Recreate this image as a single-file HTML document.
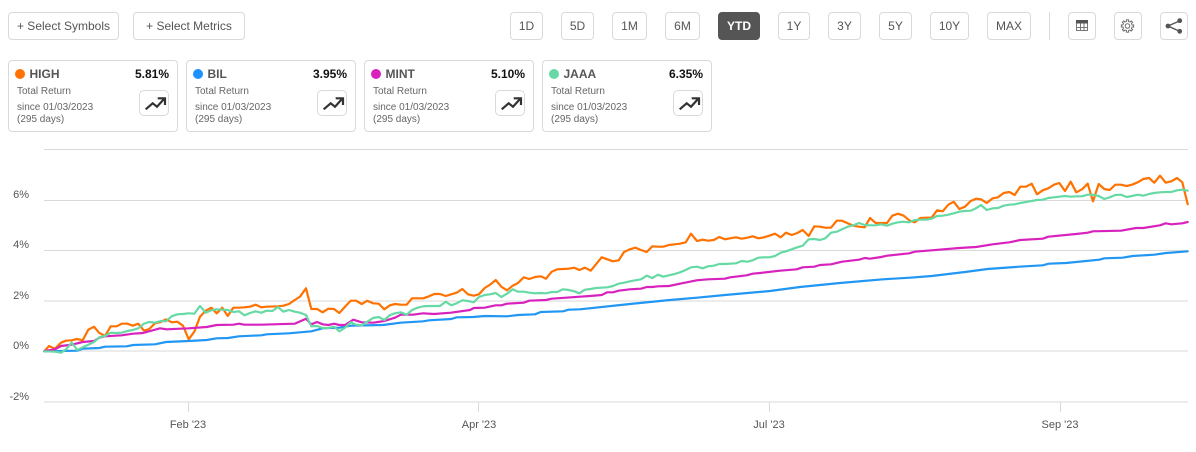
<!DOCTYPE html>
<html><head><meta charset="utf-8"><style>
html,body{margin:0;padding:0;background:#fff}
#p{position:relative;width:1196px;height:452px;overflow:hidden;font-family:"Liberation Sans",Arial,sans-serif;color:#555}
.b{position:absolute;top:12px;height:26px;border:1px solid #d9d9d9;border-radius:4px;background:#fff;font-size:12px;line-height:26px;text-align:center;white-space:nowrap}
.c{position:absolute;top:60px;width:168px;height:70px;border:1px solid #d9d9d9;border-radius:4px;background:#fff}
.d{position:absolute;left:6px;top:8px;width:10px;height:10px;border-radius:50%}
.t{position:absolute;left:20.5px;top:6px;font-size:12px;line-height:14px;font-weight:bold;color:#555}
.v{position:absolute;right:8px;top:6px;font-size:12px;line-height:14px;font-weight:bold;color:#111}
.s{position:absolute;left:8px;font-size:10px;line-height:12px;color:#666;white-space:nowrap}
.i{position:absolute;left:130px;top:29px;width:28px;height:24px;border:1px solid #d9d9d9;border-radius:5px}
.i svg{position:absolute;left:0;top:0}
.y{position:absolute;right:1167px;font-size:11px;line-height:12px;color:#555;white-space:nowrap}
.x{position:absolute;top:419px;width:60px;text-align:center;font-size:11px;line-height:12px;color:#555}
</style></head><body><div id="p">
<div class="b" style="left:8px;width:109px">+ Select Symbols</div>
<div class="b" style="left:133px;width:110px">+ Select Metrics</div>
<div class="b" style="left:510px;width:31px">1D</div>
<div class="b" style="left:561px;width:31px">5D</div>
<div class="b" style="left:612px;width:33px">1M</div>
<div class="b" style="left:665px;width:33px">6M</div>
<div class="b" style="left:718px;width:40px;background:#555;border-color:#555;color:#fff;font-weight:bold">YTD</div>
<div class="b" style="left:778px;width:30px">1Y</div>
<div class="b" style="left:828px;width:31px">3Y</div>
<div class="b" style="left:879px;width:31px">5Y</div>
<div class="b" style="left:930px;width:37px">10Y</div>
<div class="b" style="left:987px;width:42px">MAX</div>
<div style="position:absolute;left:1049px;top:12px;width:1px;height:28px;background:#d9d9d9"></div>
<div class="b" style="left:1068px;width:26px"></div>
<div class="b" style="left:1114px;width:26px"></div>
<div class="b" style="left:1160px;width:26px"></div>
<svg style="position:absolute;left:0;top:0" width="1196" height="452">
<rect x="1076" y="20" width="12" height="3.500" fill="#555"/>
<path d="M1076.500 23.500V31M1080.500 23.500V31M1084 23.500V31M1087.500 23.500V31M1076 27.500H1088M1076 30.500H1088" stroke="#777" stroke-width="1" fill="none"/>
<g transform="translate(1127.500 26)"><polygon points="4.6,-.98 6.2,-1.09 6.2,1.09 4.6,.98 3.94,2.56 5.16,3.61 3.61,5.16 2.56,3.94 .98,4.6 1.09,6.2 -1.09,6.2 -.98,4.6 -2.56,3.94 -3.61,5.16 -5.16,3.61 -3.94,2.56 -4.6,.98 -6.2,1.09 -6.2,-1.09 -4.6,-.98 -3.94,-2.56 -5.16,-3.61 -3.61,-5.16 -2.56,-3.94 -.98,-4.6 -1.09,-6.2 1.09,-6.2 .98,-4.6 2.56,-3.94 3.61,-5.16 5.16,-3.61 3.94,-2.56" fill="none" stroke="#666" stroke-width=".9"/><circle r="2.3" fill="none" stroke="#666" stroke-width=".9"/></g>
<path d="M1179.500 21L1168 26L1179.500 31.300" fill="none" stroke="#555" stroke-width="1.400"/>
<circle cx="1168" cy="26" r="2.400" fill="#555"/><circle cx="1179.700" cy="20.700" r="2.400" fill="#555"/><circle cx="1179.700" cy="31.300" r="2.400" fill="#555"/>
</svg>

<div class="c" style="left:8px"><span class="d" style="background:#ff7200"></span><span class="t">HIGH</span><span class="v">5.81%</span><span class="s" style="top:25px">Total Return</span><span class="s" style="top:41px">since 01/03/2023</span><span class="s" style="top:53px">(295 days)</span><div class="i"><svg width="28" height="24"><path d="M5.700 18.300L12.700 12.300L17 15.700L24 8M17.700 7.300H25V14" fill="none" stroke="#333" stroke-width="2.200"/></svg></div></div>
<div class="c" style="left:186px"><span class="d" style="background:#1e90ff"></span><span class="t">BIL</span><span class="v">3.95%</span><span class="s" style="top:25px">Total Return</span><span class="s" style="top:41px">since 01/03/2023</span><span class="s" style="top:53px">(295 days)</span><div class="i"><svg width="28" height="24"><path d="M5.700 18.300L12.700 12.300L17 15.700L24 8M17.700 7.300H25V14" fill="none" stroke="#333" stroke-width="2.200"/></svg></div></div>
<div class="c" style="left:364px"><span class="d" style="background:#d822bd"></span><span class="t">MINT</span><span class="v">5.10%</span><span class="s" style="top:25px">Total Return</span><span class="s" style="top:41px">since 01/03/2023</span><span class="s" style="top:53px">(295 days)</span><div class="i"><svg width="28" height="24"><path d="M5.700 18.300L12.700 12.300L17 15.700L24 8M17.700 7.300H25V14" fill="none" stroke="#333" stroke-width="2.200"/></svg></div></div>
<div class="c" style="left:542px"><span class="d" style="background:#66d9a5"></span><span class="t">JAAA</span><span class="v">6.35%</span><span class="s" style="top:25px">Total Return</span><span class="s" style="top:41px">since 01/03/2023</span><span class="s" style="top:53px">(295 days)</span><div class="i"><svg width="28" height="24"><path d="M5.700 18.300L12.700 12.300L17 15.700L24 8M17.700 7.300H25V14" fill="none" stroke="#333" stroke-width="2.200"/></svg></div></div>

<div class="y" style="top:189px">6%</div>
<div class="y" style="top:239px">4%</div>
<div class="y" style="top:290px">2%</div>
<div class="y" style="top:340px">0%</div>
<div class="y" style="top:391px">-2%</div>
<div class="x" style="left:158px">Feb '23</div>
<div class="x" style="left:449px">Apr '23</div>
<div class="x" style="left:739px">Jul '23</div>
<div class="x" style="left:1030px">Sep '23</div>

<svg style="position:absolute;left:0;top:0" width="1196" height="452">
<path d="M44 149.500H1188M44 200.500H1188M44 250.500H1188M44 301H1188M44 351H1188M44 402H1188M188.500 402V412M478.500 402V412M769.500 402V412M1060.500 402V412" stroke="#d9d9d9" stroke-width="1" fill="none"/>
<g fill="none" stroke-width="2.200" stroke-linejoin="round" stroke-linecap="round">
<polyline stroke="#ff7200" points="44.3,351.3 49,346 55,348.7 61,342.7 66,340.7 71.7,340.3 77,339 82.7,340.3 88.3,329.7 94,326.7 99,332.7 105,336 110.7,326.3 116.7,326.300 121.700,323.700 127.300,323.700 132.700,325.700 138.300,323.700 144,330.700 149.300,329 155,323.300 160.700,322 166,319.300 171.700,322.300 177.300,321.700 183,325.700 188.700,339.300 194.300,331.700 200,316.700 205.700,310.700 211.300,307.700 216.700,313.300 222.300,307.700 227.700,316 233.300,307.700 239,307.700 244.300,307.300 250,306.700 255.700,304.700 261.300,307.300 266.700,306.700 278,306.300 283.300,305.700 289,304 294.700,300 300,296.700 306,288.300 311.300,309 317,309 322.700,312.300 328.300,308.700 334,309 339.300,313 345,306.700 350.700,300.700 356,300.700 361.700,304 367.300,300.700 373,303.300 378.700,303.700 384.300,309.300 390,305.300 395,304 400.700,304.700 406.700,304.700 412,298.300 417.700,298.300 423.300,298.300 429,296.300 434.300,294 440,294 445.700,296 451.300,294.300 456.700,292.700 462.300,289 468,294.300 473.700,295.700 479,294.300 484.700,288 490,284.700 495.700,280 501.300,286.700 507,290.300 512.700,285.700 518,283 523.700,277.300 529.300,279 535,277 540.700,276.300 546,278.700 551.700,271.700 557.300,269.300 563,269 568.700,268.700 574.300,267.700 579.300,270 585,267.700 590.700,270.700 601.700,257.300 607.300,259.300 613,261.300 618.700,260.300 624,252 630,249.300 635.300,247.700 641,250 646.700,252 652.300,246.300 658,246.700 663.300,246.700 669,245 674.700,244.300 680,243.700 685.700,242.300 691,233.700 697,241 702.700,239.700 708,240.700 713.700,240 719.300,237 725,239.300 730.300,238.300 736,237.300 741.700,238.700 747.300,237.700 752.700,236.300 758.300,238.300 764,237.300 769.300,235.700 775,233.700 780.700,237.300 786,232.700 791.700,235 797.300,233 802.700,230 808.700,236 814.300,226.300 820,226.700 825.300,227.700 831,227.700 836.700,220.700 842,220.700 847.700,223.300 853.300,225.700 859,226.700 864.700,227.300 870,218 875.700,223 881.300,223 887,223 892.300,215.700 898,213.700 903.700,215.700 909.300,220.300 914.700,222.300 920.300,218 926,217.700 931.700,217.700 937,210.300 942.700,211.300 948.300,204.700 953.700,201.700 959.300,209 965,206.700 970.700,201 976,198.700 981,199.300 986.700,203 992.700,198.300 998,197.300 1003.700,193 1009.300,192 1014.700,195 1020.300,186.700 1026,186.700 1031.700,183.700 1037,194.300 1042.700,190.300 1048.300,188.300 1054,184.700 1059.300,183 1065,191 1070.700,181.700 1076.300,192.300 1082,189.300 1087.700,183.700 1093,201.300 1098.700,184 1104.300,189 1109.700,190 1115.300,184.700 1121,184.700 1126.700,186 1132,184.700 1137.700,182.300 1143.300,179 1149,178 1154.300,182.700 1160,175.700 1165.700,182.700 1171.300,181.300 1177,178 1182.300,182.300 1187.700,204.300"/>
<polyline stroke="#2196f3" points="44.3,351.3 77.3,350.7 82.7,348.7 99.3,348 105,346.700 126.700,346.300 133.300,345 155,344.300 166,342 188.700,341 206.700,340 216.700,338.300 228,338 239,336.300 261.300,335.300 266.700,334.300 289,333.300 311.300,331.300 322.700,328.300 339.300,327.700 350.700,325.700 383,325 400.700,322.700 423.300,321.300 429,320.300 451.300,319 456.700,317.300 473.300,317 484.700,316 507,316.300 518,315 535,314.300 540.700,312 563,311.300 568.700,309.700 580,309.300 630,304 670,300 697,297.700 725,295 770,291 800,287 840,283 883,279.300 910,277.700 931.700,276 965,272 987.700,269 1019,266.700 1042.700,265.300 1048.700,263.700 1066,263 1099.300,259.700 1104.300,258.300 1122.700,257.700 1132.700,256 1154.300,254.700 1166,253 1187.700,251.300"/>
<polyline stroke="#d822bd" points="44.3,351 55,349.300 61,346 71.700,344.700 82.700,342 94,341 99.300,337.700 105,336.300 121.700,335.300 133,333.700 143,333 160,328.300 166.700,329.300 188.700,328.300 206.700,327 216.700,325 233.300,324.700 239,323.700 244.300,324.700 261.300,324.700 294.700,323.700 306,318.700 311.300,324.300 317,322 322.700,324.300 328.300,325 334,323.700 339.300,325 345,325 353.300,319.700 361.700,322.300 373.300,322.700 384.300,321 395,317.700 400.700,314.700 413,314.700 423,313.300 434,314 451,312.700 470,310 473.700,308 484.700,307.700 495.700,305.300 501.300,305.300 507,303.700 523.700,302.700 529.300,300.700 546,300 551.700,298.700 580,296.700 590,296 601.700,295 607.300,292.300 613,292.300 618.700,290.700 630,289.300 641,288.700 646.700,287 652.300,287 658,286.300 669,286 680,283.700 696.700,280.300 708,279.300 725,278.700 730.300,277.300 746.700,275.300 752.700,273.700 760,273 780,270.700 796.700,269.300 802.700,267.300 814.300,266.700 820,265 831,264.300 842,261.700 859,259.700 864.700,258 870,258.700 881.300,257 887,255.700 909.300,253.300 914.700,251.700 931.700,250.300 959.300,248 976,247 992.700,244.300 1009.300,242.300 1020.300,240 1042.700,238.700 1048.300,236.700 1076,234 1087.700,232.700 1093,231.300 1121,230.700 1136,228 1143.300,228 1160,225.300 1165.700,223.300 1171.300,224.300 1182.300,223.300 1187.700,222"/>
<polyline stroke="#66d9a5" points="44.3,351.3 55,351.700 61,352.700 66,349.300 71.700,342.700 77.300,350 82.700,347.300 88.300,344.700 94,342 99.300,337.300 105,336 110.700,332.700 116.700,333 121.700,332.700 127.300,331 132.700,330 138.300,328.300 144,323.700 149.300,322 155,322.700 160.700,321 166,321.300 171.700,316.300 177.300,314.300 183,314 188.700,313.300 194.300,313.700 200,306 205.700,312.700 211.300,310.300 216.700,309.300 222.300,309.700 227.700,310 233.300,312 239,311.300 244.300,315.300 250,313 255.700,311.300 261.300,312.700 266.700,310.700 272.300,311 278,307 283.300,311.700 289,310 294.700,311.700 300,312.700 306,315 311.300,326.300 317,326 322.700,328 328.300,328 334,326.700 339.300,331.300 345,327.700 350.700,322.300 356,324.700 361.700,325.300 367.300,321.700 373,318 378.700,317 384.300,320 390,315 395,313.300 400.700,312.300 406.700,314.700 412,310 417.700,307.700 423.300,306.300 429,306 440,306 445.700,301.700 451.300,305.300 456.700,303.300 462.300,300.300 468,301 473.700,302.300 479,297 484.700,295 490,294.300 495.700,293 501.300,297 507,293.700 512.700,289.300 518,291.700 523.700,291.700 529.300,292.700 535,293.300 540.700,293 546,293.300 551.700,292 557.300,292 563,289.300 568.700,290 574.300,291.300 579.300,293.300 585,289.700 590.700,289 596,288 607.300,287.300 613,286 618.700,283.700 624,282.700 630,281.300 635.300,280.300 641,279.300 646.700,275.700 652.300,278 658,274.700 663.300,276.700 669,275.300 674.700,274 680,272.300 685.700,270 691,267.300 697,266.700 702.700,268.300 708,266.300 713.700,265.700 719.300,264 725,264 736,263.300 741.700,261 747.300,261.700 752.700,260.300 758.300,257.700 764,257.300 769.300,257.300 775,256 780.700,252.700 786,251.300 791.700,249.300 797.300,247.300 802.700,245.700 808.700,239.300 814.300,239 820,240 825.300,238.300 831,232.700 836.700,231.700 842,229.300 847.700,226.700 853.300,225.300 859,223 864.700,225 870,225.300 875.700,225.300 881.300,224.300 887,225.700 892.300,223.700 898,222.300 903.700,221.700 909.300,222.300 914.700,220 920.300,219.700 926,219.700 931.700,218.700 937,216 942.700,215.700 948.300,214.700 953.700,213.300 959.300,211.700 965,211 970.700,210.700 976,208.300 981,205 986.700,210 992.700,208.300 998,208 1003.700,205.700 1009.300,204.700 1014.700,204.300 1020.300,203 1026,202 1031.700,201 1037,200 1042.700,199.700 1048.300,198 1054,197.300 1059.300,196.700 1065,196 1070.700,196.700 1076.300,196.300 1082,196.300 1087.700,194.700 1093,194.700 1098.700,196 1104.300,199 1109.700,197.300 1115.300,195 1121,194.700 1126.700,197 1132,196 1137.700,194.700 1143.300,195.700 1149,194 1154.300,193 1160,192.300 1165.700,192 1171.300,192 1177,190.300 1182.300,189.700 1187.700,190.700"/>
</g></svg>
</div></body></html>
